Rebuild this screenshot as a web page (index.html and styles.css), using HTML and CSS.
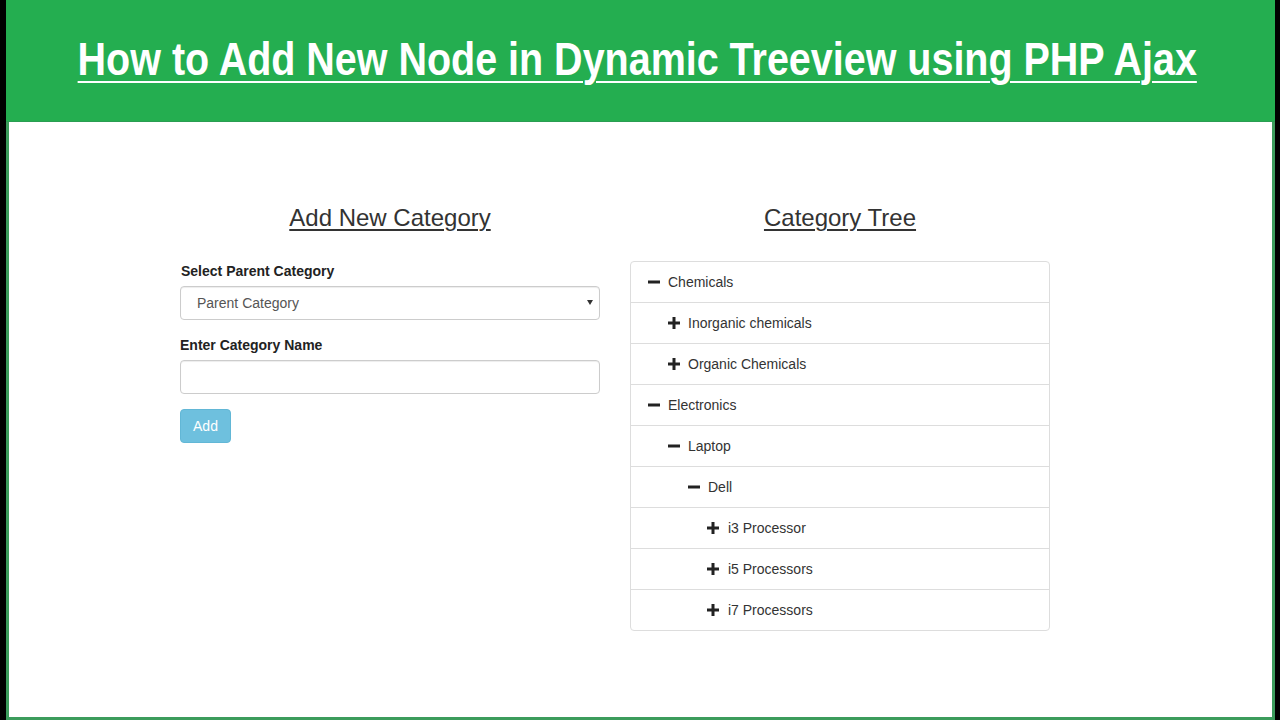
FILE: index.html
```html
<!DOCTYPE html>
<html lang="en">
<head>
<meta charset="utf-8">
<title>How to Add New Node in Dynamic Treeview using PHP Ajax</title>
<link rel="stylesheet" href="styles.css">
</head>
<body>
<div class="frame">
  <header class="banner">
    <h1 class="banner-title">How to Add New Node in Dynamic Treeview using PHP Ajax</h1>
  </header>
  <main class="content">
    <div class="columns">
      <section class="col">
        <h3 class="col-title">Add New Category</h3>
        <form class="form" onsubmit="return false;">
          <div class="form-group">
            <label class="form-label label-first">Select Parent Category</label>
            <div class="select-wrap">
              <select class="form-control select">
                <option>Parent Category</option>
              </select>
              <span class="select-arrow"></span>
            </div>
          </div>
          <div class="form-group">
            <label class="form-label">Enter Category Name</label>
            <input class="form-control" type="text">
          </div>
          <button class="btn-add" type="button">Add</button>
        </form>
      </section>
      <section class="col">
        <h3 class="col-title">Category Tree</h3>
        <ul class="tree">
          <li class="tree-item lvl0"><svg class="ico" viewBox="0 0 12 12"><rect x="0" y="4.5" width="12" height="3"/></svg>Chemicals</li>
          <li class="tree-item lvl1"><svg class="ico" viewBox="0 0 12 12"><rect x="0" y="4.5" width="12" height="3"/><rect x="4.5" y="0" width="3" height="12"/></svg>Inorganic chemicals</li>
          <li class="tree-item lvl1"><svg class="ico" viewBox="0 0 12 12"><rect x="0" y="4.5" width="12" height="3"/><rect x="4.5" y="0" width="3" height="12"/></svg>Organic Chemicals</li>
          <li class="tree-item lvl0"><svg class="ico" viewBox="0 0 12 12"><rect x="0" y="4.5" width="12" height="3"/></svg>Electronics</li>
          <li class="tree-item lvl1"><svg class="ico" viewBox="0 0 12 12"><rect x="0" y="4.5" width="12" height="3"/></svg>Laptop</li>
          <li class="tree-item lvl2"><svg class="ico" viewBox="0 0 12 12"><rect x="0" y="4.5" width="12" height="3"/></svg>Dell</li>
          <li class="tree-item lvl3"><svg class="ico" viewBox="0 0 12 12"><rect x="0" y="4.5" width="12" height="3"/><rect x="4.5" y="0" width="3" height="12"/></svg>i3 Processor</li>
          <li class="tree-item lvl3"><svg class="ico" viewBox="0 0 12 12"><rect x="0" y="4.5" width="12" height="3"/><rect x="4.5" y="0" width="3" height="12"/></svg>i5 Processors</li>
          <li class="tree-item lvl3"><svg class="ico" viewBox="0 0 12 12"><rect x="0" y="4.5" width="12" height="3"/><rect x="4.5" y="0" width="3" height="12"/></svg>i7 Processors</li>
        </ul>
      </section>
    </div>
  </main>
</div>
</body>
</html>
```

FILE: styles.css
```css
* { box-sizing: border-box; }

html, body {
  margin: 0;
  padding: 0;
  height: 720px;
  background: #000;
  overflow: hidden;
}

body {
  font-family: "Liberation Sans", Arial, Helvetica, sans-serif;
  font-size: 14px;
  line-height: 20px;
  color: #333;
}

.frame {
  margin-left: 6px;
  width: 1269px;
  height: 720px;
  display: flex;
  flex-direction: column;
}

.banner {
  height: 122px;
  background: #24ae50;
  display: flex;
  align-items: center;
  justify-content: center;
  border-bottom: 1px solid #2a9d52;
  overflow: hidden;
}

.banner-title {
  flex-shrink: 0;
  white-space: nowrap;
  margin: 0 0 4px -6px;
  font-family: "Liberation Sans", Arial, sans-serif;
  font-weight: 700;
  font-size: 46px;
  line-height: 52px;
  color: #fff;
  text-decoration: underline;
  text-decoration-thickness: 2px;
  text-underline-offset: 6px;
  transform: scaleX(0.858);
}

.content {
  flex: 1;
  background: #fff;
  border: 3px solid #3c9c5c;
  border-top: none;
  padding-top: 83px;
}

.columns {
  display: flex;
  gap: 30px;
  margin-left: 171px;
}

.col {
  width: 420px;
}

.col-title {
  margin: 0 0 30px;
  font-size: 24px;
  line-height: 26px;
  font-weight: 400;
  text-align: center;
  color: #333;
  text-decoration: underline;
  text-decoration-thickness: 1.5px;
  text-underline-offset: 3px;
}

.form-group {
  margin-bottom: 15px;
}

.form-label {
  display: block;
  margin: 0 0 5px 0;
  font-weight: 700;
  font-size: 14px;
  line-height: 20px;
  color: #222;
}

.label-first {
  margin-left: 1px;
}

.form-control {
  display: block;
  width: 100%;
  height: 34px;
  padding: 6px 12px;
  font-family: inherit;
  font-size: 14px;
  color: #555;
  background: #fff;
  border: 1px solid #ccc;
  border-radius: 4px;
  box-shadow: inset 0 1px 1px rgba(0, 0, 0, .075);
  outline: none;
}

.select-wrap {
  position: relative;
}

.select {
  appearance: none;
  -webkit-appearance: none;
  padding-left: 12px;
  text-indent: 4px;
}

.select-arrow {
  position: absolute;
  right: 7px;
  top: 14px;
  width: 0;
  height: 0;
  border-left: 3px solid transparent;
  border-right: 3px solid transparent;
  border-top: 5px solid #333;
  pointer-events: none;
}

.btn-add {
  display: block;
  width: 51px;
  height: 34px;
  padding: 6px 12px;
  font-family: inherit;
  font-size: 14px;
  line-height: 20px;
  color: #fff;
  background: #6ec0de;
  border: 1px solid #62b7d6;
  border-radius: 4px;
}

.tree {
  list-style: none;
  margin: 0;
  padding: 0;
  border: 1px solid #ddd;
  border-radius: 4px;
}

.tree-item {
  display: flex;
  align-items: center;
  height: 41px;
  padding: 0 15px 1px;
  border-bottom: 1px solid #ddd;
  font-size: 14px;
  color: #333;
}

.tree-item:last-child {
  border-bottom: none;
  height: 40px;
}

.ico {
  width: 12px;
  height: 12px;
  margin-right: 8px;
  fill: #222;
  flex-shrink: 0;
}

.lvl0 .ico { margin-left: 2px; }
.lvl1 .ico { margin-left: 22px; }
.lvl2 .ico { margin-left: 42px; }
.lvl3 .ico { margin-left: 61px; margin-right: 9px; }
```
